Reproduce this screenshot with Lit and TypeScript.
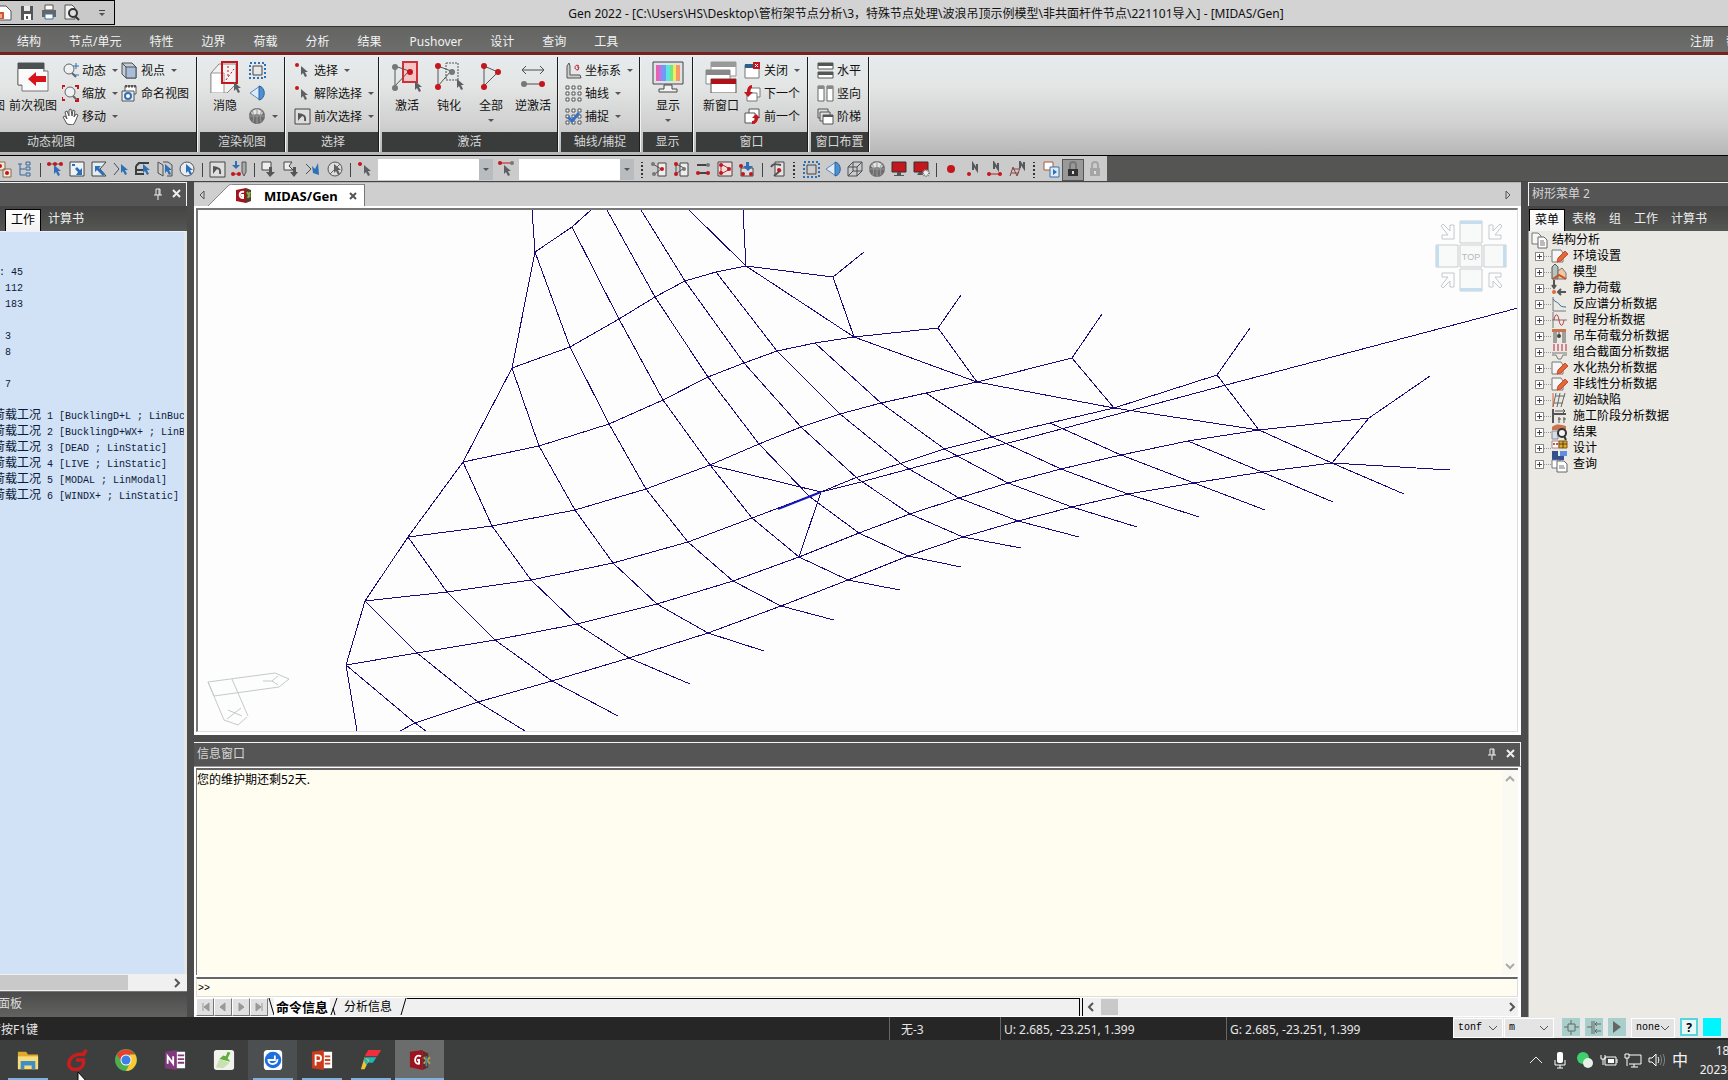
import { LitElement, html, svg, css, nothing } from "lit";
import { customElement, property } from "lit/decorators.js";

const pointer = (x: number, y: number, fill = "#5c6064") =>
  svg`<path transform="translate(${x} ${y})" d="M0 0v9l2-2 2 4 2-1-2-4h3z" fill=${fill}/>`;
const dot = (x: number, y: number, r = 2, fill = "#c4161c") =>
  svg`<circle cx=${x} cy=${y} r=${r} fill=${fill}/>`;
const line = (d: string, stroke = "#4a4f52", w = 1) =>
  svg`<path d=${d} fill="none" stroke=${stroke} stroke-width=${w}/>`;
const letterN = (x: number, y: number) =>
  line(`M${x} ${y + 6}v-6l4 6v-6`, "#55595c", 2);

const ICONS: Record<string, unknown> = {
  doc: svg`<path d="M2 2h7l5 5v9H2z" fill="#fff" stroke="#555"/><path d="M1 8h6v7H1z" fill="#d9542b"/><path d="M4 10v4" stroke="#fff"/>`,
  save: svg`<path d="M2 2h12v14H2z" fill="#555"/><path d="M5 2h6v5H5z" fill="#e8e8e8"/><path d="M5 10h7v6H5z" fill="#fff"/><path d="M7 12h2v3H7z" fill="#555"/>`,
  print: svg`<path d="M4 1h8v5H4z" fill="#fff" stroke="#555"/><path d="M1 6h14v7H1z" fill="#666"/><path d="M4 10h8v5H4z" fill="#fff" stroke="#3b74a8"/>`,
  preview: svg`<path d="M2 1h7l3 3v11H2z" fill="#f2f2f2" stroke="#555"/><circle cx="10" cy="9" r="4" fill="#ddd" stroke="#333" stroke-width="2"/><path d="M12 12l4 4" stroke="#333" stroke-width="2"/>`,
  prevView: svg`<path d="M1 2h26v22H1z" fill="#f4f4f4" stroke="#555"/><path d="M1 2h26v6H1z" fill="#4b5053"/><path d="M5 10h26v20H5z" fill="#fafafa" stroke="#777"/><path d="M1 8h25v16H1z" fill="#fafafa"/><path d="M1 8v16h4" fill="none" stroke="#777"/><path d="M11 18l8-7v4h10v6H19v4z" fill="#d8131a"/>`,
  orbit: svg`<circle cx="7" cy="7" r="5" fill="#eef2f4" stroke="#666"/><path d="M10 11l4 4" stroke="#666" stroke-width="2"/><path d="M14 1v6M11 4h6M12 13h5" stroke="#2f6fb5"/>`,
  zoom: svg`<circle cx="8" cy="7" r="5" fill="#eef2f4" stroke="#666"/><path d="M11 11l4 4" stroke="#666" stroke-width="2"/><path d="M0 4V1h3M13 1h3v3M0 12v3h3M13 16h3v-3" fill="none" stroke="#c4161c" stroke-width="2"/>`,
  hand: svg`<path d="M5 16L1 9l2-1 2 3L3 4l2-1 2 5V2l2-1 1 7 1-6 2 1-1 6 2-3 2 1-3 7-2 3z" fill="#fff" stroke="#555"/>`,
  cube: svg`<path d="M1 1h10l4 4v11H5L1 12z" fill="#c6ccd6" stroke="#4a5058"/><path d="M5 5h10v11H5z" fill="#a8bdd8" stroke="#4a5058"/><path d="M1 1l4 4" stroke="#4a5058"/>`,
  camera: svg`<path d="M4 1h11v8H4z" fill="#fff" stroke="#555"/><path d="M4 1h11" stroke="#555" stroke-width="3" stroke-dasharray="2 1"/><path d="M1 6h12v10H1z" fill="#e8ebed" stroke="#555"/><circle cx="7" cy="11" r="3" fill="#fff" stroke="#2f6fb5" stroke-width="2"/>`,
  hide: svg`<path d="M2 12L10 3h17v20l-9 9H2z" fill="#f2f2f2" stroke="#888"/><path d="M2 12h13v20H2z" fill="#fff" stroke="#999"/><path d="M13 1h15v21H13z" fill="none" stroke="#c4161c" stroke-width="2"/><path d="M19 5v10M17 19l8-11" stroke="#c4161c" stroke-dasharray="2 2"/>${pointer(25, 21)}`,
  frame: svg`<path d="M4 4h9v9H4z" fill="none" stroke="#444"/><path d="M1 1h15v15H1z" fill="none" stroke="#2f6fb5" stroke-width="2" stroke-dasharray="2 2"/>`,
  cone: svg`<path d="M1 8l10-7v14z" fill="#dcebf8" stroke="#5f8ab5"/><path d="M10 1c7 1 7 13 0 14z" fill="#4d8fd0" stroke="#2d66a0"/>`,
  globe: svg`<circle cx="8" cy="8" r="8" fill="#6e6e6e"/><path d="M2 5c3-5 9-5 12 0l-2 2-4-1-4 1z" fill="#e4e4e4"/><path d="M8 0v16M0 8h16M3 2c2 4 2 9 1 12M13 2c-2 4-2 9-1 12" fill="none" stroke="#999"/>`,
  pick: svg`${dot(3, 3)}${pointer(7, 4)}`,
  recall: svg`<path d="M1 1h15v15H1z" fill="#dedede" stroke="#444"/><path d="M4 13V5l5 1z" fill="#555"/><path d="M5 10c2-4 7-4 6 3" fill="none" stroke="#555" stroke-width="2"/>`,
  activate: svg`<path d="M12 1h14v20H12z" fill="#f5c4c4" stroke="#d03038" stroke-width="2"/><path d="M4 5v20L18 10z" fill="none" stroke="#555"/>${dot(4, 6, 3, "#777")}${dot(4, 27, 3, "#777")}${dot(19, 11, 3)}${pointer(24, 20)}`,
  deactivate: svg`<path d="M13 2h12v17H13z" fill="none" stroke="#555" stroke-dasharray="2 1"/><path d="M5 5v20L18 10z" fill="none" stroke="#555"/>${dot(5, 5, 3)}${dot(5, 26, 3)}${dot(19, 11, 3, "#777")}${pointer(24, 18)}`,
  all: svg`<path d="M9 5v20L23 11z" fill="none" stroke="#555"/>${dot(9, 5, 3)}${dot(9, 26, 3)}${dot(23, 11, 3)}`,
  inverse: svg`${line("M5 9h22M9 5L5 9l4 4M23 5l4 4-4 4")}${line("M7 23h18")}${dot(7, 23, 3, "#777")}${dot(25, 23, 3)}`,
  ucs: svg`<path d="M2 15V4l2-3 1 3v9h10l1 3H2z" fill="#ccc" stroke="#555"/><path d="M14 4c-4-3-6 4-1 4l1-3h-2" fill="none" stroke="#c4161c"/>`,
  grid: svg`${[1, 7, 13].map((y) => [1, 7, 13].map((x) => svg`<path d="M${x} ${y}h3v3h-3z" fill="#fff" stroke="#555"/>`))}`,
  snap: svg`${[1, 7, 13].map((y) => [1, 7, 13].map((x) => svg`<path d="M${x} ${y}h3v3h-3z" fill="#fff" stroke="#555"/>`))}<path d="M3 9l4 4 7-8" fill="none" stroke="#3572c8" stroke-width="3"/>`,
  display: svg`<path d="M1 1h30v22H1z" fill="#dfe3e8" stroke="#444"/><path d="M4 4h3v16H4z" fill="#ee5fae"/><path d="M7 4h3v16H7z" fill="#b07be8"/><path d="M10 4h4v16h-4z" fill="#6f9cf0"/><path d="M14 4h4v16h-4z" fill="#5fe3e0"/><path d="M18 4h3v16h-3z" fill="#6fe884"/><path d="M21 4h3v16h-3z" fill="#f2ea62"/><path d="M24 4h4v16h-4z" fill="#f59a66"/><path d="M12 24h8v4h5v3H7v-3h5z" fill="#f2f2f2" stroke="#444"/>`,
  newWin: svg`<path d="M6 1h25v14H6z" fill="#fff" stroke="#999"/><path d="M6 1h25v5H6z" fill="#999"/><path d="M1 9h24v14H1z" fill="#fff" stroke="#888"/><path d="M1 9h24v5H1z" fill="#888"/><path d="M6 18h25v14H6z" fill="#fff" stroke="#555"/><path d="M6 18h25v5H6z" fill="#b01217"/>`,
  closeWin: svg`<path d="M1 3h14v13H1z" fill="#fff" stroke="#777"/><path d="M1 2h10v4H1z" fill="#2b5f8f"/><path d="M9 0h7v7H9z" fill="#c4161c"/><path d="M11 2l3 3M14 2l-3 3" stroke="#fff"/>`,
  nextWin: svg`<path d="M6 3h10v9H6z" fill="#fff" stroke="#777"/><path d="M3 8h10v8H3z" fill="#fff" stroke="#777"/><path d="M8 0v3c-1 0-2 2-2 4h3l-5 5-4-5h3c0-4 2-7 5-7z" fill="#c4161c"/>`,
  prevWin: svg`<path d="M5 1h10v9H5z" fill="#fff" stroke="#555"/><path d="M1 5h10v10H1z" fill="#fff" stroke="#555"/><path d="M12 6l4 4h-2c0 4-3 6-6 6v-3c2 0 3-1 3-3H8z" fill="#c4161c"/>`,
  horiz: svg`<path d="M1 1h15v6H1zM1 10h15v6H1z" fill="#fff" stroke="#555"/><path d="M1 1h15v3H1zM1 10h15v3H1z" fill="#555"/>`,
  vert: svg`<path d="M1 1h6v15H1zM10 1h6v15h-6z" fill="#fff" stroke="#666"/><path d="M1 1h6v3H1zM10 1h6v3h-6z" fill="#888"/>`,
  cascade: svg`<path d="M1 1h10v9H1z" fill="#ddd" stroke="#555"/><path d="M3 4h10v9H3z" fill="#ddd" stroke="#555"/><path d="M6 7h10v9H6z" fill="#fff" stroke="#555"/><path d="M6 7h10v2H6z" fill="#555"/>`,
  t0: svg`<path d="M1 1h9v8H1zM8 8h8v8H8z" fill="#f4ead8" stroke="#8a6a50"/>${dot(5, 5)}${dot(12, 12)}${dot(3, 14)}`,
  t1: line("M1 3h4M3 3v11h5M3 8h5M9 1h4v3H9zM9 6h4v3H9zM9 12h4v3H9z", "#35689f"),
  t2: svg`${line("M1 3h14")}${dot(2, 3)}${dot(8, 3)}${dot(14, 3)}${pointer(7, 4, "#2f6fb5")}`,
  t3: svg`<path d="M1 1h14v14H1z" fill="#eef3f8" stroke="#444"/><path d="M13 14V7l-2 2-3-3-2 2 3 3-2 3z" fill="#2f6fb5"/><path d="M3 4h3" stroke="#2f6fb5" stroke-width="2"/>`,
  t4: svg`<path d="M1 1h14L9 8l6 7H1z" fill="#e4ecf4" stroke="#444"/><path d="M4 5h6L8 7l6 6-2 2-6-6-2 2z" fill="#2f6fb5"/>`,
  t5: svg`${line("M1 2l5 6-5 6")}${pointer(8, 3, "#2f6fb5")}`,
  t6: svg`${line("M1 5l3-3h10M1 9h9M1 13h8M1 5v9", "#3a3f42", 2)}${pointer(8, 3, "#2f6fb5")}`,
  t7: svg`${line("M1 1l5 3v11l-5-3zM6 1h5l4 3v11h-5")}${pointer(8, 3, "#2f6fb5")}`,
  t8: svg`<circle cx="8" cy="8" r="7" fill="#e6edf3" stroke="#555"/>${pointer(7, 3, "#2f6fb5")}`,
  t9: svg`<path d="M4 0h2v4h3L5 8 1 4h3z" fill="#2f6fb5"/><path d="M11 1h4v10l-2 4-2-4z" fill="#aaa" stroke="#555"/>${line("M1 13h8", "#c4161c")}${dot(2, 13)}${dot(8, 13)}`,
  t10: svg`<path d="M1 1h9v8H1z" fill="#eee" stroke="#444"/><path d="M8 6h3v5h3l-5 5-4-5h3z" fill="#555"/>`,
  t11: svg`<path d="M1 1h8L6 5l4 4H1z" fill="#eee" stroke="#444"/><path d="M10 6h3v5h2l-4 5-4-5h3z" fill="#555"/>`,
  t12: svg`${line("M1 3l5 5-5 5")}<path d="M7 5l3 3 3-6 1 12-6-2z" fill="#2f6fb5"/>`,
  t13: svg`<circle cx="8" cy="8" r="7" fill="#ddd" stroke="#555"/>${line("M3 13L13 3", "#666")}${pointer(7, 3)}`,
  t14: svg`${line("M1 2h14", "#c4161c")}${dot(2, 2)}${dot(14, 2, 2, "#777")}${pointer(6, 4)}`,
  t15: svg`<path d="M7 2h8v13H7z" fill="#eee" stroke="#444"/>${line("M2 3l8 5M10 8l-6 5")}${dot(2, 3, 2, "#777")}${dot(3, 13, 2, "#777")}${dot(11, 8)}`,
  t16: svg`<path d="M7 2h8v13H7z" fill="#eee" stroke="#444"/>${line("M3 3v10l8-6z")}${dot(3, 3)}${dot(3, 13)}${dot(11, 8, 2, "#777")}`,
  t17: svg`${line("M2 4h12M2 12h12", "#444", 2)}${dot(3, 12)}${dot(13, 12)}${dot(13, 4, 2, "#777")}`,
  t18: svg`<path d="M1 1h14v14H1z" fill="#f2dede" stroke="#444"/>${line("M4 3v10l9-5z", "#a33")}${dot(4, 4)}${dot(4, 12)}${dot(12, 8)}`,
  t19: svg`<path d="M2 7h12v8H2z" fill="#ddd" stroke="#444"/><path d="M7 1h3v4h4l-5 5-5-5h3z" fill="#2f6fb5"/>${dot(4, 13)}${dot(12, 13)}${dot(2, 5)}`,
  t20: svg`<path d="M6 1h9v14H6z" fill="#e4e4e4" stroke="#444"/>${line("M2 6c2-4 5-3 10-2M12 9L5 15", "#555", 2)}${dot(10, 9)}`,
  wire: svg`<path d="M1 6h9v9H1zM6 1h9v9H6zM1 6l5-5M10 6l5-5M1 15l5-5M10 15l5-5" fill="none" stroke="#4a4f52"/>`,
  mon: svg`<path d="M1 1h14v10H1z" fill="#c4161c" stroke="#333"/><path d="M6 11h4v3h3v1H3v-1h3z" fill="#555"/>`,
  monGear: svg`<path d="M1 1h14v10H1z" fill="#c4161c" stroke="#333"/><path d="M6 11h4v3H4z" fill="#555"/><circle cx="13" cy="12" r="3" fill="#eee" stroke="#777" stroke-dasharray="1 1" stroke-width="2"/>`,
  node: dot(8, 8, 4),
  nodeN: svg`${dot(4, 13)}${letterN(8, 3)}`,
  elemN: svg`${line("M2 13h12", "#c4161c")}${dot(2, 13)}${dot(13, 13)}${letterN(7, 2)}`,
  truss: svg`${line("M1 15L4 6l4 9 3-8M3 8h8M2 12h8", "#844")}${letterN(11, 1)}`,
  copyGo: svg`<path d="M1 1h9v8H1z" fill="#fff" stroke="#a85a3a"/><path d="M7 6h9v10H7z" fill="#dfeaf5" stroke="#3573b0"/><path d="M10 8l4 3-4 3z" fill="#2f6fb5"/>`,
  lockOn: svg`<path d="M3 8h10v7H3z" fill="#333"/><path d="M5 8V4c0-4 6-4 6 0v4" fill="none" stroke="#777" stroke-width="2"/><path d="M7 10h2v3H7z" fill="#ddd"/>`,
  lockOff: svg`<path d="M3 7h10v8H3z" fill="#a5a5a5"/><path d="M5 7V4c0-4 6-4 6 0v3" fill="none" stroke="#a5a5a5" stroke-width="2"/><path d="M7 10h2v3H7z" fill="#ddd"/>`,
  gen: svg`<path d="M1 3l10-2v15L1 14z" fill="#a0161c"/><path d="M11 1l5 2v11l-5 2z" fill="#5a3a2a"/><path d="M9 5c-5-2-6 6-1 6V8H6" fill="none" stroke="#fff" stroke-width="2"/><path d="M12 5l3 5M15 5l-2 6" stroke="#7fb04a" stroke-width="2"/>`,
  treeRoot: svg`<path d="M1 1h6l3 3v8H1z" fill="#f6f6f6" stroke="#777"/><path d="M7 5h6l3 3v8H7z" fill="#fff" stroke="#666"/>${line("M9 9h4M9 11h5M9 13h5", "#777")}`,
  edit: svg`<path d="M1 2h9l2 3v9H1z" fill="#f6f6f6" stroke="#777"/><path d="M6 14l1-4 7-7 3 3-7 7z" fill="#e2683c" stroke="#c94f24"/>`,
  model: svg`<path d="M1 3l3-3 3 3v12H1z" fill="#b9c2bd" stroke="#555"/><path d="M7 7l4-3 4 5v6H7z" fill="#f0c7a0" stroke="#777"/><path d="M2 15l6-4 7 4" fill="none" stroke="#c4532c" stroke-width="2"/>`,
  load: svg`${line("M3 0v8M1 5l2 3 2-3M15 12H7M10 9l-3 3 3 3", "#555", 2)}${dot(3, 12, 2, "#e2683c")}`,
  spectrum: svg`${line("M2 1v14h13", "#777")}${line("M2 3c3 4 5 3 6 5s3 3 7 3", "#35689f")}`,
  wave: svg`${line("M2 0v16M1 8h15", "#777")}${line("M3 8c1-7 4-7 5 0s4 7 5 0", "#c4364c")}`,
  crane: svg`<path d="M1 1h14v3H1z" fill="#c8744c"/>${line("M3 4v11M5 4v11M12 4v11M14 4v11M8 4v4", "#555")}${dot(8, 8, 2, "#444")}`,
  section: svg`${line("M3 0v7M7 0v7M11 0v7M15 0v7", "#b5273a")}<path d="M1 9h15M1 11h4l2 4h3l2-4h4" fill="none" stroke="#777"/>`,
  defect: svg`${line("M5 1L2 15M14 1l-4 14M5 4h9M3 11h9M9 1L6 15", "#666")}${line("M2 1v14", "#d0653c")}`,
  stage: svg`${line("M2 1v14M2 6h13", "#555", 2)}${line("M4 3h10M12 1l2 2-2 2M8 9v6M13 9v6M7 11h3M12 11h3", "#555")}`,
  result: svg`<path d="M1 3c5-4 9-2 14-1v4H1z" fill="#c8744c"/><path d="M1 7h6v8H1z" fill="#d7dbe2" stroke="#889"/><circle cx="11" cy="9" r="4" fill="#f4f4f4" stroke="#333" stroke-width="2"/><path d="M13 12l2 4" stroke="#333" stroke-width="2"/>`,
  design: svg`<path d="M1 1h7v7H1z" fill="#fff" stroke="#a88"/><path d="M8 1h8v7H8z" fill="#e2a92c" stroke="#7a5a10"/>${line("M12 1v7M8 4h8", "#5a4010")}${dot(3, 4, 1)}${dot(6, 4, 1)}<path d="M1 11h6v5H1z" fill="#35508f"/><path d="M9 11h7v5H9z" fill="#5f8fe0"/>`,
  query: svg`<path d="M1 0h12v4H1z" fill="#35508f"/><path d="M1 4h8v8H1z" fill="#fff" stroke="#778"/><path d="M6 5h7l3 3v8H6z" fill="#fff" stroke="#666"/>${line("M8 10h5M8 12h6", "#777")}`,
};

const icon = (name: string, size = 17) =>
  html`<svg class="ic" width=${size} height=${size} viewBox="0 0 ${size} ${size}" aria-hidden="true">${ICONS[name]}</svg>`;
const caret = html`<span class="caret"></span>`;

const MESH = [
  "532,210 535,252 512,368 463,462 408,537 365,601 346,665 357,731",
  "535,252 572,227 591,210",
  "512,368 570,347 619,319 655,297 685,281 716,272 746,266 833,277 864,252",
  "743,210 746,266 854,337 977,382 1114,408 1259,430 1332,463 1404,494",
  "689,210 746,266",
  "833,277 854,337",
  "463,462 539,446 609,424 663,400 708,377 744,363 777,351 815,343 854,337 938,328 961,295",
  "938,328 977,382",
  "408,537 492,526 575,510 646,489 710,465 759,444 801,427 840,414 881,403 926,393 977,382 1072,358 1102,314",
  "1072,358 1114,408",
  "365,601 447,592 531,580 613,563 688,542 752,518 821,492 855,478 902,463 944,449 992,437 1050,423 1114,408 1217,375 1250,328",
  "1217,375 1259,430",
  "821,492 861,482 909,469 957,456 1020,440 1129,411 1226,385 1518,308",
  "710,465 821,492 799,557",
  "346,665 417,653 495,640 577,624 657,604 733,581 799,557 859,533 910,514 959,498 1008,483 1061,469 1121,455 1188,441 1259,430 1369,418 1430,376",
  "1369,418 1332,463",
  "400,731 415,723 478,702 552,681 629,658 708,633 781,606 848,580 908,556 963,537 1018,521 1072,507 1128,494 1194,483 1262,472 1332,463 1450,470",
  "535,252 570,347 609,424 646,489 688,542 733,581 781,606 834,620",
  "512,368 539,446 575,510 613,563 657,604 708,633 764,651",
  "463,462 492,526 531,580 577,624 629,658 690,684",
  "408,537 447,592 495,640 552,681 618,716",
  "365,601 417,653 478,702 525,731",
  "346,665 415,723 426,731",
  "572,227 619,319 663,400 710,465 752,518 799,557 848,580 900,590",
  "607,210 655,297 708,377 759,444 810,497 859,533 908,556 961,567",
  "641,210 685,281 744,363 801,427 858,479 910,514 963,537 1021,548",
  "716,272 777,351 840,414 904,466 959,498 1018,521 1079,537",
  "815,343 881,403 946,450 1008,483 1072,507 1137,527",
  "926,393 992,437 1061,469 1128,494 1199,517",
  "1050,423 1121,455 1194,483 1265,510",
  "1188,441 1262,472 1333,502",
];

const shared = css`
  * { box-sizing: border-box; }
  button, select, input { font: inherit; color: inherit; margin: 0; padding: 0; border: 0; border-radius: 0; background: none; }
  button { display: inline-flex; align-items: center; white-space: nowrap; }
  a { color: inherit; text-decoration: none; }
  ul { list-style: none; margin: 0; padding: 0; }
  .ic { display: block; flex: none; }
  .caret { border: 3px solid transparent; border-top-color: #555; border-bottom: 0; flex: none; }
`;

@customElement("ribbon-bar")
class RibbonBar extends LitElement {
  static styles = [shared, css`
    :host { display: block; }
    .ribbon { display: flex; height: 101px; gap: 3px; overflow: hidden; border-bottom: 1px solid #000;
      background: linear-gradient(#e6ebee 0, #e4e6e5 30%, #cfd0cf 70%, #b6b6b6 100%); }
    .group { display: flex; flex-direction: column; flex: none; border-right: 1px solid #1c1c1c; margin: 2px 0 3px; box-shadow: 1px 0 #f2f2f2; }
    .body { display: flex; flex: 1; }
    .name { height: 20px; line-height: 19px; background: #3a3c3c; color: #d8d8d8; text-align: center; white-space: nowrap; }
    .big { flex-direction: column; width: 42px; padding-top: 4px; flex: none; }
    .big .txt { margin-top: 4px; line-height: 18px; }
    .big .caret { margin-top: 4px; }
    .col { display: flex; flex-direction: column; padding-top: 2px; }
    .small { height: 23px; gap: 3px; }
    .small .caret { margin-left: 3px; }
    .g1 { width: 197px; } .g1 .name { padding-right: 94px; } .g2 { width: 85px; } .g3 { width: 91px; } .g4 { width: 176px; }
    .g5 { width: 79px; } .g6 { width: 50px; } .g7 { width: 112px; } .g8 { width: 58px; }
    .cut { margin-left: -40px; } .wide { width: 50px; }
    .g1 .big.wide { margin-left: 6px; } .g1 .col { margin-left: 4px; }
    .g1 .col + .col { margin-left: 3px; }
    .g2 .big, .g5 .col { margin-left: 4px; } .g6 .big { margin-left: 4px; } .g2 .col { margin-left: 3px; }
    .g3 .col { margin-left: 6px; } .g4 .body { padding-left: 4px; } .g7 .col { margin-left: -2px; } .g8 .col { margin-left: 6px; }
  `];
  private big(ic: string, label: string, drop = false, cls = "") {
    return html`<button class="big ${cls}">${icon(ic, 32)}<span class="txt">${label}</span>${drop ? caret : nothing}</button>`;
  }
  private col(items: [string, string, boolean][]) {
    return html`<div class="col">${items.map(([ic, label, drop]) =>
      html`<button class="small" aria-label=${label || ic}>${icon(ic)}${label ? html`<span>${label}</span>` : nothing}${drop ? caret : nothing}</button>`)}</div>`;
  }
  private group(cls: string, name: string, body: unknown) {
    return html`<div class="group ${cls}"><div class="body">${body}</div><div class="name">${name}</div></div>`;
  }
  render() {
    return html`<div class="ribbon">
      ${this.group("g1", "动态视图", html`
        <button class="big cut"><svg class="ic" width="32" height="32"></svg><span class="txt">初始视图</span></button>
        ${this.big("prevView", "前次视图", false, "wide")}
        ${this.col([["orbit", "动态", true], ["zoom", "缩放", true], ["hand", "移动", true]])}
        ${this.col([["cube", "视点", true], ["camera", "命名视图", false]])}`)}
      ${this.group("g2", "渲染视图", html`${this.big("hide", "消隐")}${this.col([["frame", "", false], ["cone", "", false], ["globe", "", true]])}`)}
      ${this.group("g3", "选择", this.col([["pick", "选择", true], ["pick", "解除选择", true], ["recall", "前次选择", true]]))}
      ${this.group("g4", "激活", html`${this.big("activate", "激活")}${this.big("deactivate", "钝化")}${this.big("all", "全部", true)}${this.big("inverse", "逆激活")}`)}
      ${this.group("g5", "轴线/捕捉", this.col([["ucs", "坐标系", true], ["grid", "轴线", true], ["snap", "捕捉", true]]))}
      ${this.group("g6", "显示", this.big("display", "显示", true))}
      ${this.group("g7", "窗口", html`${this.big("newWin", "新窗口", false, "wide")}${this.col([["closeWin", "关闭", true], ["nextWin", "下一个", false], ["prevWin", "前一个", false]])}`)}
      ${this.group("g8", "窗口布置", this.col([["horiz", "水平", false], ["vert", "竖向", false], ["cascade", "阶梯", false]]))}
    </div>`;
  }
}

@customElement("icon-toolbar")
class IconToolbar extends LitElement {
  static styles = [shared, css`
    :host { display: block; background: #555654; border-bottom: 1px solid #444; }
    .bar { display: flex; align-items: center; height: 25px; width: max-content; background: #cbcbcb; padding: 2px 1px 0 0; margin-left: -8px; }
    .tool { width: 22px; height: 22px; justify-content: center; }
    .tool.on { background: #999; border: 1px solid #555; }
    .sep { width: 8px; display: flex; justify-content: center; }
    .sep::before { content: ""; width: 1px; height: 14px; background: #444; }
    .grip { width: 12px; height: 16px; background: radial-gradient(circle, #333 1px, transparent 1px) center / 4px 4px repeat-y; }
    .combo { display: flex; width: 115px; height: 21px; margin: 0 2px; background: #fff; }
    .combo select { appearance: none; flex: 1; }
    .combo .arrow { width: 14px; display: flex; align-items: center; justify-content: center; background: #b9bcbf; }
  `];
  render() {
    const items = "t0 t1 | t2 t3 t4 t5 t6 t7 t8 | recall t9 | t10 t11 t12 t13 | pick = t14 = : t15 t16 t17 t18 t19 | t20 : frame cone wire globe mon monGear | node nodeN elemN truss : copyGo lockOn lockOff".split(" ");
    return html`<div class="bar">${items.map((n) =>
      n === "|" ? html`<span class="sep"></span>`
      : n === ":" ? html`<span class="grip"></span>`
      : n === "=" ? html`<label class="combo"><select aria-label="选择"><option></option></select><span class="arrow">${caret}</span></label>`
      : html`<button class="tool ${n === "lockOn" ? "on" : ""}" aria-label=${n}>${icon(n)}</button>`)}</div>`;
  }
}

@customElement("model-view")
class ModelView extends LitElement {
  static styles = css`
    :host { display: block; height: 100%; overflow: hidden; }
    svg { display: block; width: 100%; height: 100%; }
    .mesh { fill: none; stroke: #1a0a78; shape-rendering: crispEdges; }
    .heavy { fill: none; stroke: #1616b8; stroke-width: 2; }
    .faint { fill: none; stroke: #c4c8ca; }
    .face { fill: #f8faf9; stroke: #c9cdce; }
    .edge { fill: #c3dfef; }
    .axis { fill: none; stroke: #c2cbc6; }
    text { font: 9px "Liberation Sans", sans-serif; fill: #b4b8ba; text-anchor: middle; }
  `;
  render() {
    const arrow = "M-7 -7l2 -2 7 7v-6h4v14h-12v-4h6z";
    return html`<svg viewBox="198 210 1319 521" preserveAspectRatio="xMidYMid meet" role="img" aria-label="MIDAS/Gen">
      ${MESH.map((p) => svg`<polyline class="mesh" points=${p}/>`)}
      <path class="heavy" d="M778 509L821 492"/>
      <path class="face" d="M1460 221h22v22h-22zM1460 245h22v22h-22zM1436 245h22v22h-22zM1484 245h22v22h-22zM1460 269h22v22h-22z"/>
      <path class="edge" d="M1460 221h22v3h-22zM1436 245h3v22h-3zM1503 245h3v22h-3zM1460 288h22v3h-22z"/>
      ${[[1448, 233, "1 1"], [1495, 233, "-1 1"], [1448, 279, "1 -1"], [1495, 279, "-1 -1"]].map(([x, y, s]) =>
        svg`<path class="faint" transform="translate(${x} ${y}) scale(${s})" d=${arrow}/>`)}
      <text x="1471" y="260">TOP</text>
      <path class="axis" d="M208 682l67-9 14 6-10 8-65 9zM232 679l16 37M208 682l16 38 14 5 9-8M263 681h9l6-5M272 681l6 4M227 719l14-11M228 710l14 6"/>
    </svg>`;
  }
}

const TREE: [string, string][] = [
  ["edit", "环境设置"], ["model", "模型"], ["load", "静力荷载"], ["spectrum", "反应谱分析数据"], ["wave", "时程分析数据"],
  ["crane", "吊车荷载分析数据"], ["section", "组合截面分析数据"], ["edit", "水化热分析数据"], ["edit", "非线性分析数据"],
  ["defect", "初始缺陷"], ["stage", "施工阶段分析数据"], ["result", "结果"], ["design", "设计"], ["query", "查询"],
];

@customElement("side-panel")
class SidePanel extends LitElement {
  @property() heading = "";
  @property({ attribute: false }) tabs: string[] = [];
  @property() active = "";
  @property({ type: Boolean }) closable = false;
  static styles = [shared, css`
    :host { display: flex; flex-direction: column; min-width: 0; overflow: hidden; }
    .head { display: flex; align-items: center; height: 24px; padding: 0 4px 2px 3px; color: #d5d5d5; background: #555; border: 1px solid #f4f4f4; border-bottom: 0; }
    :host([closable]) .head { border-left: 0; }
    :host(:not([closable])) .head { border-right: 0; }
    .head span { flex: 1; }
    .tools { display: flex; gap: 8px; }
    .tabs { display: flex; gap: 1px; height: 25px; padding: 3px 0 0 1px; background: linear-gradient(#444, #555753); color: #eee; }
    .tab { padding: 0 6px 2px; }
    .tab.on { color: #000; background: linear-gradient(#fff, #f2f2f2); border: 1px solid #000; border-bottom: 0; padding: 0 5px 2px; }
    :host([closable]) .tabs { padding-left: 5px; }
    .content { flex: 1; min-height: 0; overflow: hidden; display: flex; flex-direction: column; }
  `];
  render() {
    return html`<header class="head"><span>${this.heading}</span>${this.closable ? html`<div class="tools">
        <button aria-label="固定"><svg width="10" height="12" viewBox="0 0 10 12"><path d="M3 1h4v6M3 1v6M1 7h8M5 7v5M6 1v6" fill="none" stroke="#eee"/></svg></button>
        <button aria-label="关闭"><svg width="11" height="11" viewBox="0 0 11 11"><path d="M2 2l7 7M9 2l-7 7" stroke="#eee" stroke-width="2"/></svg></button></div>` : nothing}</header>
      ${this.tabs.length ? html`<nav class="tabs">${this.tabs.map((t) => html`<button class="tab ${t === this.active ? "on" : ""}">${t}</button>`)}</nav>` : nothing}
      <div class="content"><slot></slot></div>`;
  }
}

const TASKS: { art: unknown; state?: string; name: string }[] = [
  { name: "文件", state: "run", art: svg`<path d="M1 3h9l2 3h11v16H1z" fill="#e0a92e"/><path d="M1 8h22v14H1z" fill="#f9dc7c"/><path d="M4 13h16v9h-4v-4H8v4H4z" fill="#3f8fc4"/>` },
  { name: "gen", art: svg`<path d="M22 1l-3 5c-8-1-15 2-16 10 0 9 14 8 16 0v-4h-8" fill="none" stroke="#c81e1e" stroke-width="4"/>` },
  { name: "浏览器", art: svg`<circle cx="12" cy="12" r="12" fill="#4caf50"/><path d="M2 6a12 12 0 0 1 20 0H12L7 14z" fill="#e8402f"/><path d="M22 6a12 12 0 0 1-10 18l5-10-1-8z" fill="#fcc934"/><circle cx="12" cy="12" r="6" fill="#fff"/><circle cx="12" cy="12" r="5" fill="#3f7fe8"/>` },
  { name: "笔记", art: svg`<path d="M12 3h11v18H12z" fill="#fff"/><path d="M15 7h7M15 11h7M15 15h7" stroke="#80397b" stroke-width="2"/><path d="M1 3l13-2v22L1 21z" fill="#80397b"/><path d="M4 16V8l6 8V8" fill="none" stroke="#fff" stroke-width="2"/>` },
  { name: "清理", art: svg`<rect x="1" y="1" width="22" height="22" rx="3" fill="#f2f2ec"/><path d="M16 3l3 1-3 6 3 4-12-3 4-4 3 1z" fill="#5fae3e"/><path d="M7 11l11 4-7 6-8-1z" fill="#c9dfb4"/>` },
  { name: "会议", state: "run hover", art: svg`<rect x="2" y="1" width="20" height="22" rx="4" fill="#fff"/><circle cx="12" cy="12" r="9" fill="#1d6fe0"/><path d="M14 7v5H7c0 6 9 6 10-1" fill="none" stroke="#fff" stroke-width="2"/>` },
  { name: "演示", state: "run", art: svg`<path d="M12 3h11v18H12z" fill="#fff"/><path d="M15 8h6M15 12h6M15 16h6" stroke="#d04423" stroke-width="2"/><path d="M1 3l13-2v22L1 21z" fill="#c83c1c"/><path d="M5 18V7h3c4 0 4 6 0 6H5" fill="none" stroke="#fff" stroke-width="2"/>` },
  { name: "录屏", state: "run", art: svg`<path d="M9 1h14l-4 7H5z" fill="#ef2f3d"/><path d="M6 9h12l-4 6H8z" fill="#22b5b5"/><path d="M5 9l5 3-5 10H1z" fill="#f2c230"/><path d="M5 9l4 4-2 5-3-6z" fill="#22b5b5"/>` },
  { name: "MIDAS/Gen", state: "run active", art: svg`<path d="M1 3l14-2v22L1 20z" fill="#9c1420"/><path d="M15 2l6 3v15l-6 3z" fill="#642a24"/><path d="M13 8c-7-4-9 9-2 8v-4H9" fill="none" stroke="#fff" stroke-width="2"/><path d="M16 9l7 7M23 9l-7 7" stroke="#b5a13a" stroke-width="2"/><path d="M19 8v11" stroke="#3f86b5" stroke-width="2"/>` },
];

@customElement("app-root")
class AppRoot extends LitElement {
  static styles = [shared, css`
    :host { display: flex; flex-direction: column; min-height: 100vh; overflow: hidden; background: #4a4b4a; color: #111;
      font: 12px/16px "Noto Sans", "Noto Sans CJK SC", sans-serif; }
    .title { display: flex; height: 27px; background: #d3d3d3; border-bottom: 1px solid #333; }
    .quick { display: flex; align-items: center; gap: 5px; width: 115px; border: 1px solid #000; border-left: 0; margin-bottom: 1px; background: #c9c9c9; }
    .quick .first { margin-left: -3px; } .quick .more { margin-left: 14px; flex-direction: column; }
    .quick .more::before { content: ""; width: 6px; height: 1px; background: #444; margin-bottom: 2px; }
    .title h1 { flex: 1; margin: 0; font-weight: 400; font-size: 12px; line-height: 27px; text-align: center; padding-left: 9px; }
    .menu { display: flex; height: 28px; padding-left: 3px; color: #f2f2f2; background: linear-gradient(#646563, #6d6e6c); border-bottom: 3px solid #762222; }
    .menu a { padding: 0 14px; line-height: 29px; white-space: nowrap; }
    .menu .right { margin-left: auto; display: flex; margin-right: -22px; } .menu .right a { padding: 0 0 0 12px; }
    .main { flex: 1; display: grid; grid-template-columns: 187px minmax(0, 1fr) 200px; gap: 7px; min-height: 0; }
    .work { flex: 1; background: #d1e1f6; border-right: 3px solid #e4e6e6; border-top: 1px solid #eef; overflow: hidden; padding-top: 33px; color: #0a1a3a; }
    .work p { margin: 0 0 0 -1px; height: 16px; white-space: pre; font: 10px/16px "Liberation Mono", monospace; }
    .work p.case { margin-left: -7px; }
    .work b { font: 12px/1px "Noto Sans CJK SC", sans-serif; }
    .hscroll { display: flex; align-items: center; height: 17px; background: #f0f0f0; }
    .hscroll i { height: 15px; background: #c9c9c9; }
    .hscroll svg { margin-left: auto; }
    .panelTab { height: 26px; padding: 4px 0 0 0; margin-left: -2px; color: #ddd; background: linear-gradient(#4a4b4a, #626361); border-top: 1px solid #777; }
    .center { display: flex; flex-direction: column; gap: 7px; min-width: 0; }
    .doc { flex: 1; display: flex; flex-direction: column; min-height: 0; background: #fff; }
    .docTabs { display: flex; align-items: flex-end; height: 24px; background: #cfcfcf; border-top: 1px solid #b5b5b5; padding: 0 9px 0 4px; }
    .docTabs > .nav { align-self: center; } .docTabs .slant { margin-left: 2px; }
    .docTab { height: 22px; background: #fff; border-top: 1px solid #888; border-right: 1px solid #777; padding: 0 6px 0 3px; font-weight: 700; font-size: 13px; color: #000; }
    .docTab .ic { margin-right: 12px; } .docTab .x { margin-left: 10px; }
    .docTabs > .nav.end { margin-left: auto; }
    .canvas { flex: 1; min-height: 0; margin: 2px 3px 3px 2px; border: 1px solid #ddd; border-top: 2px solid #777; border-left: 2px solid #777; background: #fdfdfd; }
    .info { height: 275px; }
    .infoBox { flex: 1; display: flex; flex-direction: column; background: #fff; padding: 0 3px 1px 2px; border-top: 1px solid #999; }
    .log { flex: 1; display: flex; background: #fffdf0; border-top: 2px solid #666; border-left: 1px solid #777; margin-top: 1px; color: #000; }
    .log p { flex: 1; margin: 0; padding: 2px 0 0; }
    .vscroll { width: 16px; display: flex; flex-direction: column; justify-content: space-between; padding: 4px 0; align-items: center; background: #fbfaf2; }
    .prompt { display: flex; height: 20px; margin-top: 2px; background: #fffdf0; border: 1px solid #ddd; border-top: 2px solid #666; padding-left: 1px; font: 10px/19px "Liberation Mono", monospace; color: #000; }
    .prompt input { flex: 1; min-width: 0; }
    .sheets { display: flex; height: 18px; margin-top: 1px; background: #f0f0f0; color: #000; }
    .sheets .nav { width: 18px; justify-content: center; background: #e0e0e0; border: 1px solid #fff; border-right-color: #777; border-bottom-color: #777; }
    .sheets .sheet { padding: 0 6px; height: 18px; } .sheets .bold { padding: 0 2px; font-size: 13px; font-weight: 700; background: #fff; }
    .sheets .rest { flex: 1; border-top: 1px solid #000; border-right: 1px solid #000; margin-right: 2px; }
    .sheets .hs { width: 436px; display: flex; align-items: center; border-left: 1px solid #000; padding: 0 1px 0 3px; }
    .sheets .hs i { width: 17px; height: 16px; background: #c9c9c9; margin-left: 5px; } .sheets .hs svg:last-child { margin-left: auto; }
    .tree { flex: 1; background: #eae9e4; color: #000; padding: 1px 0 0 2px; border-left: 1px solid #999; }
    .root, .node { display: flex; align-items: center; height: 16px; white-space: nowrap; }
    .root { gap: 4px; } .node { padding-left: 4px; }
    .exp { width: 9px; height: 9px; background: linear-gradient(#444, #444) center / 5px 1px no-repeat, linear-gradient(#444, #444) center / 1px 5px no-repeat, #fff; border: 1px solid #888; flex: none; }
    .dots { width: 7px; border-top: 1px dotted #999; } .node .ic { margin-right: 5px; }
    .status { display: flex; height: 23px; background: #262626; color: #e6e6e6; line-height: 25px; white-space: nowrap; }
    .status > span { border-left: 1px solid #666; padding-left: 3px; }
    .status .help { flex: 1; border: 0; padding: 0; margin-left: -11px; } .s1 { width: 111px; } .status .s1 { padding-left: 11px; } .s2 { width: 226px; } .s3 { width: 227px; }
    .units { display: flex; gap: 5px; width: 275px; height: 21px; background: #e9e9e9; padding-top: 1px; color: #000; overflow: hidden; }
    .unit { display: flex; align-items: center; width: 50px; height: 20px; background: #e4e4e4; border: 1px solid #fff; margin-right: -4px; }
    .unit select { appearance: none; width: 34px; height: 18px; padding-left: 4px; font: 10px/18px "Liberation Mono", monospace; color: #000; overflow: hidden; }
    .unit.short { width: 44px; margin-right: 0; } .unit.short select { width: 28px; } .unit.gap { margin-right: 3px; }
    .mini { width: 18px; height: 18px; background: #a9cfcb; justify-content: center; flex: none; } .q { background: #e8f8f8; border: 2px solid #57d5d8; font-weight: 700; } .cy { background: #00f6ff; }
    .taskbar { position: relative; display: flex; height: 40px; background: #3d3e3e; color: #f2f2f2; padding-left: 3px; }
    .task { width: 49px; justify-content: center; }
    .task.run { background: linear-gradient(#7fb2e2, #7fb2e2) center bottom / 40px 2px no-repeat; }
    .task.hover { background-color: #4c4f50; } .task.active { background-color: #6b6d6d; background-size: 49px 2px; }
    .tray { margin-left: auto; display: flex; align-items: center; gap: 6px; margin-right: -36px; white-space: nowrap; }
    .tray .zh { font-size: 16px; } .clock { display: flex; flex-direction: column; align-items: center; line-height: 19px; margin-left: 4px; width: 66px; }
    .mouse { position: absolute; left: 77px; top: 32px; }
  `];
  private chev(dir: string, color = "#555") {
    const d: Record<string, string> = { r: "M3 1l4 4-4 4", l: "M7 1L3 5l4 4", u: "M1 7l4-4 4 4", d: "M1 3l4 4 4-4" };
    return html`<svg width="10" height="10" viewBox="0 0 10 10" aria-hidden="true"><path d=${d[dir]} fill="none" stroke=${color} stroke-width="2"/></svg>`;
  }
  private unit(v: string, cls = "") {
    return html`<label class="unit ${cls}"><select aria-label=${v}><option>${v}</option></select><svg width="12" height="10" viewBox="0 0 12 10"><path d="M1 3l4 4 4-4" fill="none" stroke="#555"/></svg></label>`;
  }
  render() {
    const cases = ["1 [BucklingD+L ; LinBuckling]", "2 [BucklingD+WX+ ; LinBuckling]", "3 [DEAD ; LinStatic]", "4 [LIVE ; LinStatic]", "5 [MODAL ; LinModal]", "6 [WINDX+ ; LinStatic]"];
    return html`
      <header class="title">
        <div class="quick"><button class="first" aria-label="信息">${icon("doc")}</button><button aria-label="保存">${icon("save")}</button><button aria-label="打印">${icon("print")}</button><button aria-label="预览">${icon("preview")}</button><button class="more" aria-label="更多">${caret}</button></div>
        <h1>Gen 2022 - [C:\\Users\\HS\\Desktop\\管桁架节点分析\\3，特殊节点处理\\波浪吊顶示例模型\\非共面杆件节点\\221101导入] - [MIDAS/Gen]</h1>
      </header>
      <nav class="menu">${["结构", "节点/单元", "特性", "边界", "荷载", "分析", "结果", "Pushover", "设计", "查询", "工具"].map((m) => html`<a href="#">${m}</a>`)}
        <span class="right"><a href="#">注册</a><a href="#">帮助</a></span></nav>
      <ribbon-bar></ribbon-bar>
      <icon-toolbar></icon-toolbar>
      <main class="main">
        <side-panel closable .tabs=${["工作", "计算书"]} active="工作">
          <div class="work">
            ${[": 45", " 112", " 183", "", " 3", " 8", "", " 7", ""].map((t) => html`<p>${t}</p>`)}
            ${cases.map((t) => html`<p class="case"><b>荷载工况</b> ${t}</p>`)}
          </div>
          <div class="hscroll"><i style="width:128px"></i>${this.chev("r")}<span style="width:5px"></span></div>
          <div class="panelTab">面板</div>
        </side-panel>
        <div class="center">
          <section class="doc">
            <div class="docTabs">
              <button class="nav" aria-label="左"><svg width="8" height="10" viewBox="0 0 8 10"><path d="M6 1v8L2 5z" fill="none" stroke="#555"/></svg></button>
              <svg class="slant" width="24" height="22" viewBox="0 0 24 22"><path d="M0 22L21 1l3-1v22z" fill="#fff"/><path d="M0 22L21 1l3-1" fill="none" stroke="#888"/></svg>
              <button class="docTab">${icon("gen")}MIDAS/Gen<svg class="x" width="10" height="10" viewBox="0 0 10 10"><path d="M2 2l6 6M8 2L2 8" stroke="#555" stroke-width="2"/></svg></button>
              <button class="nav end" aria-label="右"><svg width="8" height="10" viewBox="0 0 8 10"><path d="M2 1v8l4-4z" fill="none" stroke="#555"/></svg></button>
            </div>
            <div class="canvas"><model-view></model-view></div>
          </section>
          <side-panel class="info" closable heading="信息窗口">
            <div class="infoBox">
              <div class="log"><p>您的维护期还剩52天.</p><div class="vscroll">${this.chev("u", "#aaa")}${this.chev("d", "#aaa")}</div></div>
              <label class="prompt">&gt;&gt;<input aria-label="命令"></label>
              <div class="sheets">
                ${["M4 1v8M10 1v8L5 5z", "M8 1v8L3 5z", "M4 1v8l5-4z", "M3 1v8l5-4zM9 1v8"].map((d) => html`<button class="nav" aria-label="翻页"><svg width="12" height="10" viewBox="0 0 12 10"><path d=${d} fill="#999" stroke="#999"/></svg></button>`)}
                <svg width="6" height="18" viewBox="0 0 6 18"><path d="M1 0l5 17" stroke="#000"/></svg>
                <button class="sheet bold">命令信息</button>
                <svg width="8" height="18" viewBox="0 0 8 18"><path d="M7 0L1 17M3 10l2 7" stroke="#000"/></svg>
                <button class="sheet">分析信息</button>
                <svg width="9" height="18" viewBox="0 0 9 18"><path d="M8 0L3 17" stroke="#000"/></svg>
                <span class="rest"></span>
                <span class="hs">${this.chev("l")}<i></i>${this.chev("r")}</span>
              </div>
            </div>
          </side-panel>
        </div>
        <side-panel heading="树形菜单 2" .tabs=${["菜单", "表格", "组", "工作", "计算书"]} active="菜单">
          <div class="tree">
            <div class="root">${icon("treeRoot")}结构分析</div>
            <ul>${TREE.map(([ic, t]) => html`<li class="node"><button class="exp" aria-label="展开"></button><span class="dots"></span>${icon(ic)}${t}</li>`)}</ul>
          </div>
        </side-panel>
      </main>
      <footer class="status">
        <span class="help">请按F1键</span><span class="s1">无-3</span><span class="s2">U: 2.685, -23.251, 1.399</span><span class="s3">G: 2.685, -23.251, 1.399</span>
        <div class="units">${this.unit("tonf")}${this.unit("m", "gap")}
          <button class="mini" aria-label="节点"><svg width="15" height="15" viewBox="0 0 15 15"><path d="M4 4h7v7H4zM7 0v4M7 11v4M0 7h4M11 7h4" fill="none" stroke="#666" stroke-width="1"/></svg></button>
          <button class="mini" aria-label="单元"><svg width="15" height="15" viewBox="0 0 15 15"><path d="M5 1v13M7 1v13M0 7h5M8 4h6M8 11h6M10 2L8 4l2 2M10 9l-2 2 2 2" fill="none" stroke="#666"/></svg></button>
          <button class="mini" aria-label="运行"><svg width="12" height="14" viewBox="0 0 12 14"><path d="M2 1l8 6-8 6z" fill="#666"/></svg></button>
          ${this.unit("none", "short")}<button class="mini q">?</button><button class="mini cy" aria-label="颜色"></button></div>
      </footer>
      <div class="taskbar">
        ${TASKS.map((t) => html`<button class="task ${t.state ?? ""}" aria-label=${t.name}><svg width="22" height="22" viewBox="0 0 24 24">${t.art}</svg></button>`)}
        <div class="tray">
          <svg width="16" height="20" viewBox="0 0 16 20"><path d="M2 13l6-6 6 6" fill="none" stroke="#eee" stroke-width="1"/></svg>
          <svg width="20" height="20" viewBox="0 0 20 20"><rect x="7" y="2" width="6" height="11" rx="2" fill="#fff"/><path d="M5 10v5h10v-5M10 15v3M7 18h6" fill="none" stroke="#fff"/></svg>
          <svg width="18" height="20" viewBox="0 0 18 20"><circle cx="7" cy="8" r="6" fill="#3ed06a"/><circle cx="12" cy="13" r="5" fill="#e6f2e8"/></svg>
          <svg width="18" height="20" viewBox="0 0 18 20"><path d="M5 7h11v8H5zM17 9v4" fill="none" stroke="#fff"/><path d="M8 9h6v4H8z" fill="#fff"/><path d="M1 5v4h4V5M3 9v6" fill="none" stroke="#fff"/></svg>
          <svg width="18" height="20" viewBox="0 0 18 20"><path d="M5 5h12v9H5M10 14v3M7 17h7M1 4h4v4H1zM3 8v8" fill="none" stroke="#fff"/></svg>
          <svg width="18" height="20" viewBox="0 0 18 20"><path d="M1 8h3l4-4v12l-4-4H1zM10 7c1 2 1 4 0 6" fill="none" stroke="#fff"/><path d="M12 5c2 3 2 7 0 10M15 4c2 4 2 8 0 12" fill="none" stroke="#888"/></svg>
          <button class="zh">中</button>
          <div class="clock"><span>18:01</span><span>2023-05-08</span></div>
        </div>
        <svg class="mouse" width="12" height="18" viewBox="0 0 12 18"><path d="M1 0v15l3-3 3 5 2-1-2-5h4z" fill="#fff" stroke="#000"/></svg>
      </div>`;
  }
}
